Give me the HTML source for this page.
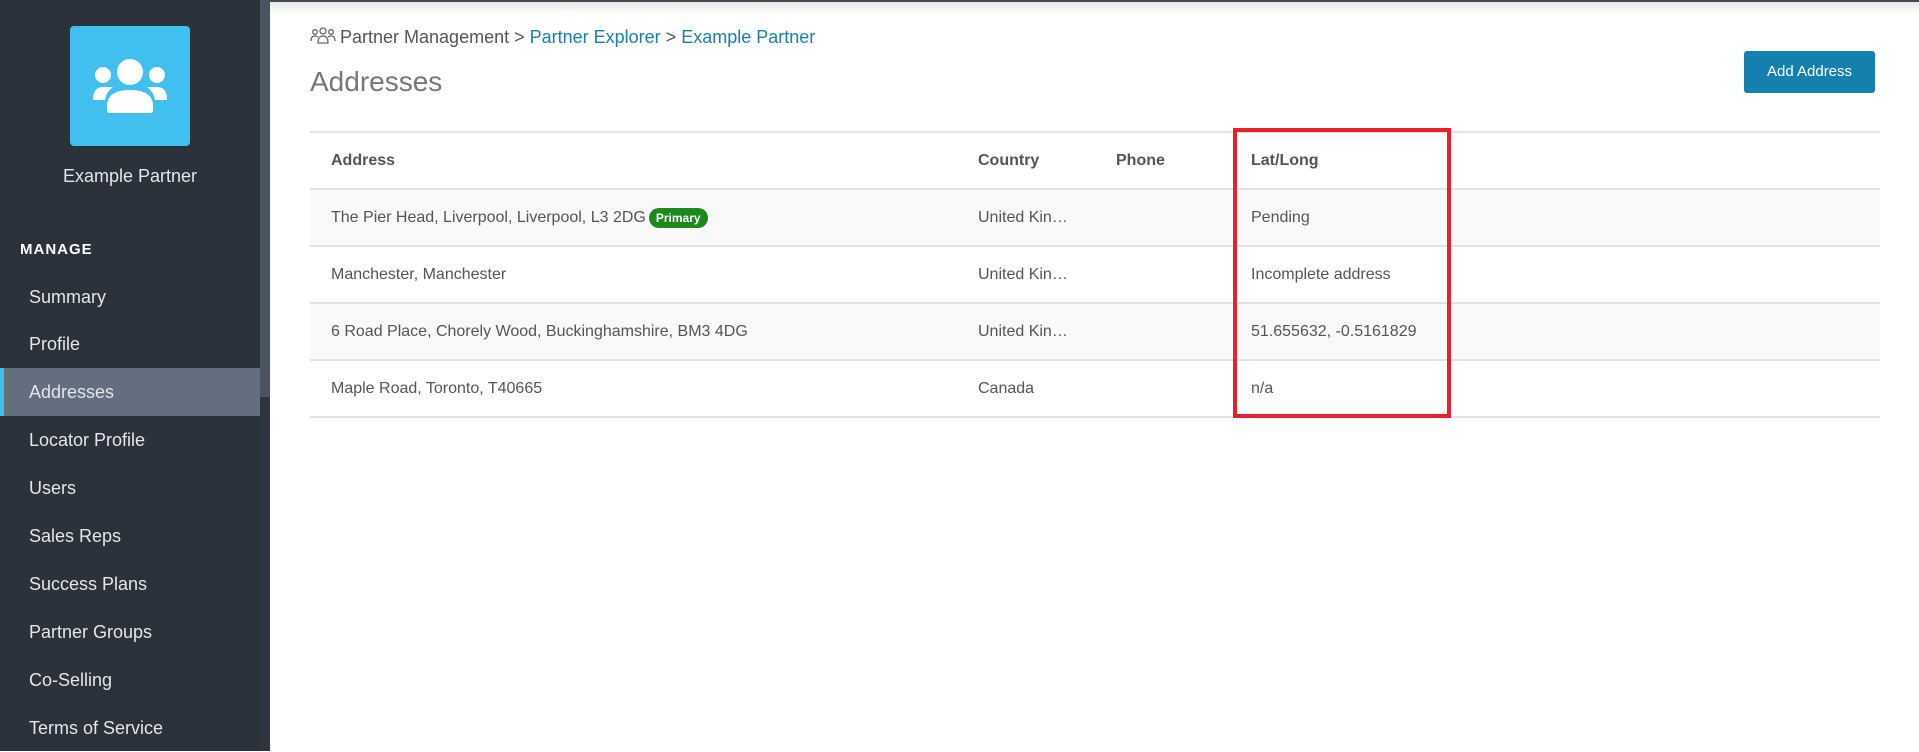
<!DOCTYPE html>
<html><head><meta charset="utf-8"><style>
*{margin:0;padding:0;box-sizing:border-box}
body{width:1919px;height:751px;overflow:hidden;background:#fff;font-family:"Liberation Sans",sans-serif;position:relative}
.sb{position:absolute;left:0;top:0;width:260px;height:751px;background:#2b323b}
.strip{position:absolute;left:260px;top:0;width:10px;height:751px;background:#2e353e}
.thumb{position:absolute;left:260px;top:0;width:10px;height:397px;background:#4a5360}
.logo{position:absolute;left:70px;top:26px;width:120px;height:120px;background:#41c0ef;border-radius:4px}
.pname{position:absolute;left:0;width:260px;top:166px;text-align:center;color:#e4e6e8;font-size:18px}
.manage{position:absolute;left:20px;top:241px;color:#fff;font-weight:bold;font-size:15px;letter-spacing:1px}
.mi{position:absolute;left:0;width:260px;height:48px;line-height:48px;padding-left:29px;color:#e4e6e8;font-size:18px}
.mi.act{background:#636f7e;border-left:4px solid #41c0ef;padding-left:25px}
.topsh{position:absolute;left:270px;top:0;right:0;height:14px;background:linear-gradient(#e6e7e9,#fff);border-top:2px solid #434b55}
.bc{position:absolute;left:310px;top:26px;font-size:18px;color:#555}
.bc a{color:#1a7fa8;text-decoration:none}
h1{position:absolute;left:310px;top:66px;font-size:28px;font-weight:normal;color:#777}
.btn{position:absolute;left:1744px;top:51px;width:131px;height:42px;background:#1580ad;border-radius:3px;color:#fff;font-size:15px;text-align:center;line-height:42px}
table{position:absolute;left:310px;top:131px;width:1570px;border-collapse:collapse;font-size:16px;color:#555}
td,th{text-align:left;border-top:2px solid #e3e3e3;height:57px;padding:0;vertical-align:middle}
th{height:57px;font-weight:bold;color:#555}
tr.s td{background:#f9f9f9}
tr:last-child td{border-bottom:2px solid #e3e3e3}
.badge{display:inline-block;background:#1a8a1a;color:#fff;font-weight:bold;font-size:12px;padding:0 7px;height:20px;line-height:20px;border-radius:10px;vertical-align:middle;margin-left:3px}
.red{position:absolute;left:1233px;top:128px;width:218px;height:290px;border:4px solid #e8202a}
</style></head><body>
<div class="sb"></div><div class="strip"></div><div class="thumb"></div>
<div class="logo"><svg width="120" height="120" viewBox="0 0 120 120" fill="#fff">
<circle cx="60" cy="46" r="13"/><circle cx="33" cy="49" r="8"/><circle cx="87" cy="49" r="8"/>
<path d="M37 84 L37 80 Q37 64 60 64 Q83 64 83 80 L83 84 Q83 87 80 87 L40 87 Q37 87 37 84Z"/>
<path d="M23 74 Q23 61 33 61 L43 61 Q36 66 35 74Z"/>
<path d="M97 74 Q97 61 87 61 L77 61 Q84 66 85 74Z"/>
</svg></div>
<div class="pname">Example Partner</div>
<div class="manage">MANAGE</div>
<div class="mi" style="top:273px">Summary</div>
<div class="mi" style="top:320px">Profile</div>
<div class="mi act" style="top:368px">Addresses</div>
<div class="mi" style="top:416px">Locator Profile</div>
<div class="mi" style="top:464px">Users</div>
<div class="mi" style="top:512px">Sales Reps</div>
<div class="mi" style="top:560px">Success Plans</div>
<div class="mi" style="top:608px">Partner Groups</div>
<div class="mi" style="top:656px">Co-Selling</div>
<div class="mi" style="top:704px">Terms of Service</div>
<div class="topsh"></div>
<div class="bc"><svg width="26" height="20" viewBox="0 0 26 20" style="vertical-align:-3px;margin-right:4px" fill="none" stroke="#666" stroke-width="1.3"><circle cx="13" cy="5" r="3"/><circle cx="5" cy="6" r="2.3"/><circle cx="21" cy="6" r="2.3"/><path d="M8 17 Q8 10 13 10 Q18 10 18 17Z"/><path d="M1 15 Q1 10 5 10 Q7 10 8 11"/><path d="M25 15 Q25 10 21 10 Q19 10 18 11"/></svg>Partner Management &gt; <a>Partner Explorer</a> &gt; <a>Example Partner</a></div>
<h1>Addresses</h1>
<div class="btn">Add Address</div>
<table>
<colgroup><col style="width:668px"><col style="width:138px"><col style="width:135px"><col></colgroup>
<tr><th style="padding-left:21px">Address</th><th>Country</th><th>Phone</th><th>Lat/Long</th></tr>
<tr class="s"><td style="padding-left:21px">The Pier Head, Liverpool, Liverpool, L3 2DG<span class="badge">Primary</span></td><td>United Kin…</td><td></td><td>Pending</td></tr>
<tr><td style="padding-left:21px">Manchester, Manchester</td><td>United Kin…</td><td></td><td>Incomplete address</td></tr>
<tr class="s"><td style="padding-left:21px">6 Road Place, Chorely Wood, Buckinghamshire, BM3 4DG</td><td>United Kin…</td><td></td><td>51.655632, -0.5161829</td></tr>
<tr><td style="padding-left:21px">Maple Road, Toronto, T40665</td><td>Canada</td><td></td><td>n/a</td></tr>
</table>
<div class="red"></div>
</body></html>
